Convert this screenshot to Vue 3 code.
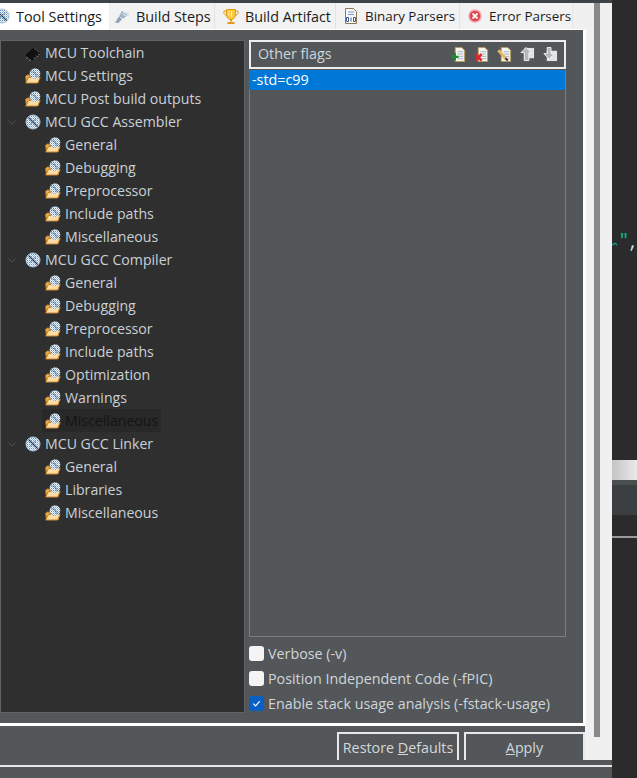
<script setup>
const tabs = [
  { label: 'Tool Settings', icon: 'i-gear', width: 109, pad: 0, size: 14.4, active: true, clip: true },
  { label: 'Build Steps', icon: 'i-steps', width: 105, pad: 4, size: 14.4 },
  { label: 'Build Artifact', icon: 'i-trophy', width: 120, pad: 7, size: 14.3 },
  { label: 'Binary Parsers', icon: 'i-binary', width: 123, pad: 6, size: 13.4 },
  { label: 'Error Parsers', icon: 'i-error', width: 112, pad: 6, size: 13.4 }
]
const tree = [
  { label: 'MCU Toolchain', icon: 'i-chip', level: 0 },
  { label: 'MCU Settings', icon: 'i-folder', level: 0 },
  { label: 'MCU Post build outputs', icon: 'i-folder', level: 0 },
  { label: 'MCU GCC Assembler', icon: 'i-gear', level: 0, open: true },
  { label: 'General', icon: 'i-folder', level: 1 },
  { label: 'Debugging', icon: 'i-folder', level: 1 },
  { label: 'Preprocessor', icon: 'i-folder', level: 1 },
  { label: 'Include paths', icon: 'i-folder', level: 1 },
  { label: 'Miscellaneous', icon: 'i-folder', level: 1 },
  { label: 'MCU GCC Compiler', icon: 'i-gear', level: 0, open: true },
  { label: 'General', icon: 'i-folder', level: 1 },
  { label: 'Debugging', icon: 'i-folder', level: 1 },
  { label: 'Preprocessor', icon: 'i-folder', level: 1 },
  { label: 'Include paths', icon: 'i-folder', level: 1 },
  { label: 'Optimization', icon: 'i-folder', level: 1 },
  { label: 'Warnings', icon: 'i-folder', level: 1 },
  { label: 'Miscellaneous', icon: 'i-folder', level: 1, selected: true },
  { label: 'MCU GCC Linker', icon: 'i-gear', level: 0, open: true },
  { label: 'General', icon: 'i-folder', level: 1 },
  { label: 'Libraries', icon: 'i-folder', level: 1 },
  { label: 'Miscellaneous', icon: 'i-folder', level: 1 }
]
const tools = ['i-add', 'i-del', 'i-edit', 'i-up', 'i-down']
const checks = [
  { label: 'Verbose (-v)', on: false },
  { label: 'Position Independent Code (-fPIC)', on: false },
  { label: 'Enable stack usage analysis (-fstack-usage)', on: true }
]
</script>

<template>
  <div class="root">
    <svg class="defs" width="0" height="0" aria-hidden="true">
      <defs>
        <pattern id="dither" width="2" height="2" patternUnits="userSpaceOnUse">
          <rect width="2" height="2" fill="#f6f9fc" />
          <rect width="1" height="1" fill="#5f8bb6" />
          <rect x="1" y="1" width="1" height="1" fill="#a9c4dd" />
        </pattern>
        <symbol id="doc" viewBox="0 0 16 16">
          <path d="M4.500 .5h7l3 3v12h-10z" fill="#f7f5ea" stroke="#b89a5a" />
          <path d="M7 5h6M7 7.500h6M7 10h6M7 12.500h6" stroke="#9db2d8" />
        </symbol>
        <symbol id="i-folder" viewBox="0 0 16 16">
          <path d="M.5 8.500 2 7h3v2h8.500v5.500H1.500z" fill="#e8a94c" stroke="#b97a22" />
          <path d="M.8 15 3.500 9.500h11.700L12.500 15z" fill="#ffdca3" stroke="#c98a2c" />
          <circle cx="10" cy="5.500" r="5.300" fill="url(#dither)" />
          <path d="M6 3l8 5M8 1.500l4 8" stroke="#25486d" stroke-width=".7" opacity=".6" />
        </symbol>
        <symbol id="i-gear" viewBox="0 0 16 16">
          <circle cx="8" cy="8" r="7" fill="url(#dither)" />
          <circle cx="8" cy="8" r="7" fill="none" stroke="#a8c2dc" />
          <path d="M3.500 3.500l9 9" stroke="#23405f" stroke-width="1.200" />
          <path d="M5 10.500 10.500 5" stroke="#4d7499" />
        </symbol>
        <symbol id="i-chip" viewBox="0 0 16 16">
          <path d="M1 10 9 3l6 5-8 7z" fill="#111" stroke="#050505" />
          <path d="M3 12.500 1.500 14M5.500 14.500 4 16M11 10.500l1.500 1.500M13 8.500l1.500 1.500M9 12.500l1.500 1.500" stroke="#8c8c8c" />
          <path d="M9 3l5.500 4.500" stroke="#5a5a5a" />
        </symbol>
        <symbol id="i-steps" viewBox="0 0 16 16">
          <path d="M1 14.500 5 8.500l3 2.500-3.500 4z" fill="#8ba3b8" />
          <path d="M5 8.500 8 3l7 3-5.500 4.500z" fill="#9db4c6" />
          <path d="M9 4l5 2.500M8.500 6l4 2" stroke="#eef3f7" />
        </symbol>
        <symbol id="i-trophy" viewBox="0 0 16 16">
          <path d="M3.500 1.500h9v5.500a4.500 4.500 0 0 1-9 0z" fill="#ffc83d" stroke="#e09a17" />
          <path d="M3.500 3H1v2.500L3.500 8M12.500 3H15v2.500L12.500 8" fill="none" stroke="#e09a17" />
          <path d="M8 11.500v2M4.500 15h7" stroke="#e09a17" stroke-width="2" />
          <path d="M6 3v5M8.500 3v6" stroke="#fff0b8" />
        </symbol>
        <symbol id="i-binary" viewBox="0 0 16 16">
          <path d="M2.500 .5h8l3 3v12h-11z" fill="#f7f7f7" stroke="#8a7a55" />
          <path d="M5 4h6M5 6.500h6" stroke="#7d97c8" />
          <path d="M3 9h10v5H3z" fill="#fff" />
          <path d="M3.500 9.500h2v4h-2zM8 9.500v4M10.500 9.500h2v4h-2z" fill="none" stroke="#3a5b8c" />
        </symbol>
        <symbol id="i-error" viewBox="0 0 16 16">
          <circle cx="8" cy="8" r="6" fill="#e0434f" stroke="#f2a5aa" stroke-width="1.500" />
          <path d="M5.500 5.500l5 5M10.500 5.500l-5 5" stroke="#fff" stroke-width="1.800" />
        </symbol>
        <symbol id="i-add" viewBox="0 0 16 16">
          <use href="#doc" width="16" height="16" />
          <path d="M4 6.500v8M0 10.500h8" stroke="#1d8a2a" stroke-width="2.600" />
        </symbol>
        <symbol id="i-del" viewBox="0 0 16 16">
          <use href="#doc" width="16" height="16" />
          <path d="M1.500 7.500l6.500 7M8 7.500l-6.500 7" stroke="#e0242c" stroke-width="2.800" />
        </symbol>
        <symbol id="i-edit" viewBox="0 0 16 16">
          <use href="#doc" width="16" height="16" />
          <path d="M1.500 3.500 9.500 12.500" stroke="#e8b860" stroke-width="3" />
          <path d="M9 12l2.500 2.500" stroke="#333" stroke-width="2" />
        </symbol>
        <symbol id="i-up" viewBox="0 0 16 16">
          <path d="M5 1h10v11H5z" fill="#e2e3e3" />
          <path d="M6.500 .5 12 6H9.500v8.500h-5V6H1z" fill="#b4b6b7" stroke="#f4f4f4" />
        </symbol>
        <symbol id="i-down" viewBox="0 0 16 16">
          <path d="M4 4h11v11H4z" fill="#e2e3e3" />
          <path d="M4.500 .5h4V7H12L6.500 13 1 7h3.500z" fill="#b4b6b7" stroke="#f4f4f4" />
        </symbol>
      </defs>
    </svg>

    <div class="main">
      <div class="top-edge"></div>
      <div class="upper">
        <div class="folder">
          <div class="tabs">
            <div
              v-for="tab in tabs"
              :key="tab.label"
              class="tab"
              :class="{ active: tab.active, clipped: tab.clip }"
              :style="{ width: tab.width + 'px', paddingLeft: tab.pad + 'px', fontSize: tab.size + 'px' }"
            >
              <svg class="tab-icon"><use :href="'#' + tab.icon" width="16" height="16" /></svg>
              <span>{{ tab.label }}</span>
            </div>
          </div>
          <div class="panel">
            <div class="tree">
              <div
                v-for="(row, i) in tree"
                :key="i"
                class="tree-row"
                :class="{ sub: row.level === 1 }"
              >
                <svg v-if="row.open" class="chevron" viewBox="0 0 8 5">
                  <path d="M.5 .5 4 4 7.500 .5" fill="none" stroke="#4e4e4e" />
                </svg>
                <div class="tree-item" :class="{ selected: row.selected }">
                  <svg class="tree-icon"><use :href="'#' + row.icon" width="16" height="16" /></svg>
                  <span>{{ row.label }}</span>
                </div>
              </div>
            </div>
            <div class="options">
              <div class="flags-head">
                <span>Other flags</span>
                <div class="tools">
                  <svg v-for="tool in tools" :key="tool" class="tool"><use :href="'#' + tool" width="15" height="15" /></svg>
                </div>
              </div>
              <div class="flags-list">
                <div class="flag selected-flag">-std=c99</div>
              </div>
              <label v-for="c in checks" :key="c.label" class="check">
                <span class="box" :class="{ on: c.on }">
                  <svg v-if="c.on" viewBox="0 0 16 16" width="15" height="15">
                    <path d="M4.500 8.200 7 10.500l4.500-5" fill="none" stroke="#fff" stroke-width="1.200" />
                  </svg>
                </span>
                <span>{{ c.label }}</span>
              </label>
            </div>
          </div>
          <div class="actions">
            <button class="btn restore">Restore <u>D</u>efaults</button>
            <button class="btn apply"><u>A</u>pply</button>
          </div>
        </div>
        <div class="rail"><div class="thumb"></div></div>
      </div>
      <div class="footer-line"></div>
    </div>

    <div class="strip">
      <div class="code">
        <svg class="arc" viewBox="0 0 6 4"><path d="M.5 3.500C1 .8 4.500 .8 5 3.500" fill="none" stroke="#16a085" stroke-width="1.300" /></svg>
        <span class="quote">"</span><span class="comma">,</span>
      </div>
      <div class="sash"></div>
      <div class="sash-gap"></div>
      <div class="sash-block"></div>
      <div class="sash-dark"></div>
      <div class="sash-line"></div>
      <div class="sash-rest"></div>
    </div>
  </div>
</template>

<style>
html, body { margin: 0; padding: 0; background: #2b2b2b; }
</style>

<style scoped>
.root {
  display: flex;
  width: 637px;
  height: 778px;
  overflow: hidden;
  background: #2b2b2b;
  font-family: "Open Sans", "Noto Sans", sans-serif;
  font-size: 14.3px;
}
.defs { display: block; flex: none; }
.main {
  width: 612px;
  flex: none;
  display: flex;
  flex-direction: column;
  background: #535759;
}
.top-edge { height: 3px; background: #3f4345; }
.upper {
  display: flex;
  height: 757px;
  background: #f0f0f0;
}
.folder {
  width: 586px;
  display: flex;
  flex-direction: column;
}
.tabs {
  display: flex;
  height: 26px;
  flex: none;
  background: #f0f0f0;
  color: #1b1b1b;
}
.tab {
  display: flex;
  align-items: center;
  gap: 6px;
  box-sizing: border-box;
  margin-right: 1px;
  background: #f2f2f2;
  border-right: 1px solid #e4e4e4;
  overflow: hidden;
  white-space: nowrap;
}
.tab.active { background: #fff; border-right: 0; }
.tab.clipped .tab-icon { margin-left: -6px; }
.tab-icon { width: 16px; height: 16px; flex: none; }
.panel {
  flex: none;
  box-sizing: border-box;
  width: 586px;
  height: 697px;
  display: flex;
  gap: 4px;
  align-items: flex-start;
  padding: 10px 0 0 0;
  background: #535759;
  border-top: 1px solid #fff;
  border-right: 3px solid #fff;
  border-bottom: 3px solid #fff;
}
.tree {
  box-sizing: border-box;
  width: 245px;
  height: 673px;
  flex: none;
  background: #2f2f2f;
  border: 1px solid #5f6365;
  color: #c9d0d6;
  font-size: 14.15px;
}
.tree-row {
  position: relative;
  height: 23px;
  display: flex;
  align-items: center;
  padding-left: 24px;
}
.tree-row.sub { padding-left: 41px; }
.tree-item {
  display: flex;
  align-items: center;
  gap: 4px;
  height: 23px;
  white-space: nowrap;
  padding: 0 3px;
  border-radius: 2px;
}
.tree-row:not(.sub) .tree-item { padding: 0; }
.tree-item.selected { background: #282828; color: #141414; }
.tree-icon { width: 16px; height: 16px; flex: none; }
.chevron {
  position: absolute;
  left: 7px;
  top: 10px;
  width: 8px;
  height: 5px;
}
.options {
  width: 317px;
  flex: none;
  height: 676px;
  display: flex;
  flex-direction: column;
  color: #d0d5da;
}
.flags-head {
  box-sizing: border-box;
  height: 29px;
  flex: none;
  display: flex;
  align-items: center;
  justify-content: space-between;
  padding: 0 6px 2px 7px;
  border: 2px solid #eeeeee;
  margin-bottom: 1px;
}
.tools { display: flex; gap: 8px; padding-top: 2px; }
.tool { width: 15px; height: 15px; }
.flags-list {
  flex: 1;
  box-sizing: border-box;
  border: 1px solid #797d80;
  border-top: 0;
  margin-bottom: 4px;
}
.flag {
  height: 20px;
  line-height: 20px;
  padding-left: 3px;
  margin-left: -1px;
  color: #fff;
}
.selected-flag { background: #0078d7; }
.check {
  height: 25px;
  flex: none;
  display: flex;
  align-items: center;
  gap: 4px;
  white-space: nowrap;
}
.box {
  box-sizing: border-box;
  width: 15px;
  height: 15px;
  flex: none;
  border-radius: 3px;
  background: #f4f4f4;
  display: flex;
}
.box.on { background: #0a5fc4; }
.actions {
  flex: 1;
  width: 585px;
  display: flex;
  justify-content: flex-end;
  align-items: flex-start;
  gap: 5px;
  padding-top: 6px;
  box-sizing: border-box;
  background: #535759;
}
.btn {
  height: 28px;
  box-sizing: border-box;
  border: 2px solid #e6e8e9;
  border-bottom: 0;
  background: transparent;
  color: #d4d8dc;
  font: inherit;
  padding: 0;
}
.restore { width: 122px; }
.apply { width: 121px; }
.rail {
  width: 21px;
  box-sizing: border-box;
  padding-left: 8px;
  background: #f0f0f0;
}
.thumb { width: 6px; height: 734px; background: #888888; }
.footer-line {
  height: 2px;
  margin-top: 5px;
  background: #e6e8e9;
}
.strip {
  flex: 1;
  display: flex;
  flex-direction: column;
}
.code {
  height: 460px;
  flex: none;
  box-sizing: border-box;
  padding: 232px 0 0 0;
  display: flex;
  align-items: flex-start;
  font-family: "Liberation Mono", monospace;
  font-size: 16px;
  line-height: 18px;
}
.arc { width: 6px; height: 4px; margin-top: 10px; flex: none; }
.quote { color: #14a37f; margin-left: 1px; font-weight: 700; }
.comma { color: #d9e6f2; margin-top: 3px; }
.sash { height: 20px; flex: none; background: linear-gradient(90deg, #c4c4c4, #ececec); }
.sash-gap { height: 5px; flex: none; background: #4a4f50; }
.sash-block { height: 30px; flex: none; background: #3c3f41; }
.sash-dark { height: 21px; flex: none; }
.sash-line { height: 2px; flex: none; background: #9a9a9a; }
.sash-rest { flex: 1; }
</style>
